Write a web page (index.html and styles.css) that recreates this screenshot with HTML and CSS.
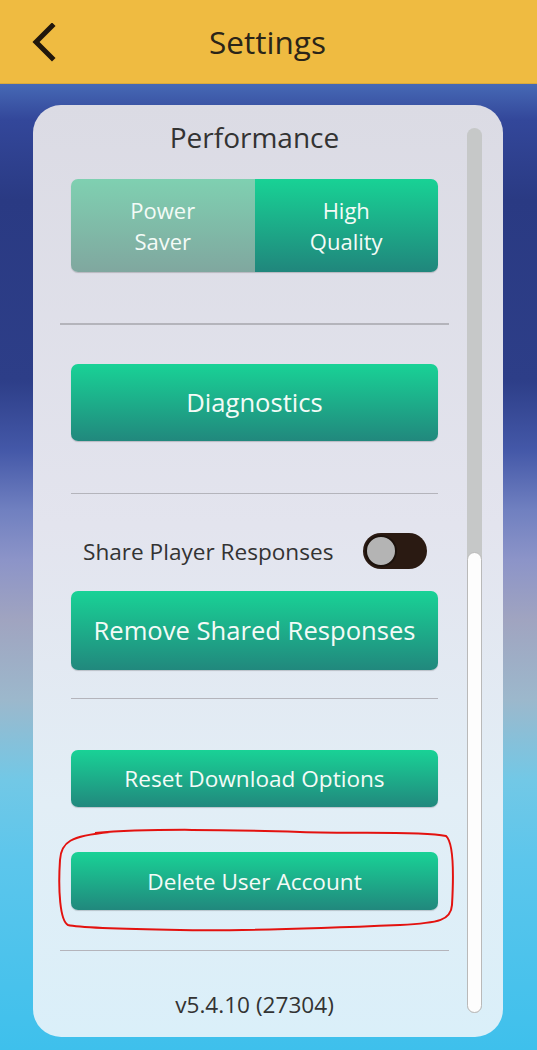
FILE: index.html
```html
<!DOCTYPE html>
<html>
<head>
<meta charset="utf-8">
<link rel="stylesheet" href="styles.css">
</head>
<body>
<div class="page">
  <header class="topbar">
    <div class="back">
      <svg width="30" height="40" viewBox="0 0 30 40"><polyline points="21,3 5,19 21,35" fill="none" stroke="#21170c" stroke-width="5" stroke-linecap="square"/></svg>
    </div>
    <div class="title">Settings</div>
    <div></div>
  </header>
  <main class="main">
    <section class="card">
      <div class="content">
        <div class="heading">Performance</div>
        <div class="seg">
          <div class="seg-item off">Power<br>Saver</div>
          <div class="seg-item on">High<br>Quality</div>
        </div>
        <div class="divider wide thick"></div>
        <div class="btn big diag">Diagnostics</div>
        <div class="divider narrow d1"></div>
        <div class="share">
          <span>Share Player Responses</span>
          <div class="toggle"><div class="knob"></div></div>
        </div>
        <div class="btn big remove">Remove Shared Responses</div>
        <div class="divider narrow d2"></div>
        <div class="btn small reset">Reset Download Options</div>
        <div class="btn small delete">Delete User Account</div>
        <div class="divider wide d3"></div>
        <div class="version">v5.4.10 (27304)</div>
      </div>
      <div class="scroll"><div class="thumb"></div></div>
    </section>
  </main>
  <svg class="annot" width="537" height="1050" viewBox="0 0 537 1050">
    <path d="M 95 833 C 150 828, 230 830, 300 832 C 360 834, 420 831, 446 836 C 453 842, 454 870, 452 905 C 451 920, 440 923, 400 925 C 330 928, 250 931, 180 930 C 120 929, 80 928, 68 925 C 60 921, 58 890, 60 860 C 61 842, 70 836, 110 832" fill="none" stroke="#e3120f" stroke-width="2"/>
  </svg>
</div>
</body>
</html>
```
FILE: styles.css
```css
html, body {
  margin: 0;
  padding: 0;
}
body {
  width: 537px;
  height: 1050px;
  overflow: hidden;
  font-family: "Open Sans", "Noto Sans", sans-serif;
  color: #333;
}
.page {
  position: relative;
  width: 537px;
  height: 1050px;
  background: linear-gradient(180deg,
    #4669b5 84px,
    #33479a 120px,
    #2a3a83 200px,
    #2d3e88 380px,
    #4458a8 450px,
    #7080c0 510px,
    #8c94c8 560px,
    #a0a4c0 620px,
    #9cb8cc 700px,
    #72c8e6 780px,
    #5cc6ec 860px,
    #3ec0ec 1050px);
}
.topbar {
  height: 84px;
  background: #efbb41;
  border-bottom: 1px solid #d9a93c;
  box-sizing: border-box;
  display: grid;
  grid-template-columns: 1fr auto 1fr;
  align-items: center;
}
.back {
  padding-left: 31px;
  display: flex;
  align-items: center;
  padding-top: 2px;
}
.back svg { display: block; }
.title {
  font-size: 31.5px;
  line-height: 40px;
  color: #2a2418;
  padding-right: 2px;
}
.main {
  padding: 21px 34px 0 33px;
}
.card {
  position: relative;
  height: 932px;
  box-sizing: border-box;
  border-radius: 28px;
  background: linear-gradient(180deg, #dbdbe4 0%, #e3e4ee 45%, #e2eef6 75%, #daeff9 100%);
  padding: 14px 54px 0 27px;
}
.heading {
  font-size: 28px;
  line-height: 37px;
  text-align: center;
  color: #333;
}
.seg {
  margin: 23px 11px 0;
  height: 93px;
  display: flex;
  border-radius: 7px;
  overflow: hidden;
  box-shadow: 0 1px 1px rgba(0,0,0,0.18);
}
.seg-item {
  flex: 1;
  display: flex;
  align-items: center;
  justify-content: center;
  text-align: center;
  font-size: 22px;
  line-height: 31px;
  color: #f4fbf7;
}
.seg-item.off {
  background: linear-gradient(180deg, #7fd0b1, #80a79f);
}
.seg-item.on {
  background: linear-gradient(180deg, #18d295, #20867c);
}
.divider {
  background: #b4b4bb;
  height: 1px;
}
.divider.thick { height: 2px; }
.divider.wide { margin-left: 0; margin-right: 0; }
.divider.narrow { margin-left: 11px; margin-right: 11px; }
.thick { margin-top: 51px; }
.d1 { margin-top: 52px; }
.d2 { margin-top: 28px; }
.d3 { margin-top: 40px; }
.btn {
  margin-left: 11px;
  margin-right: 11px;
  border-radius: 7px;
  background: linear-gradient(180deg, #19d296, #21887d);
  color: #f4fbf7;
  display: flex;
  align-items: center;
  justify-content: center;
  box-shadow: 0 1px 1px rgba(0,0,0,0.18);
}
.btn.big {
  font-size: 25.6px;
}
.btn.small {
  font-size: 22.6px;
}
.diag { margin-top: 39px; height: 77px; }
.remove { margin-top: 22px; height: 79px; }
.reset { margin-top: 51px; height: 57px; }
.delete { margin-top: 45px; height: 58px; }
.share {
  margin: 39px 11px 0;
  padding: 0 11px 0 12px;
  height: 36px;
  display: flex;
  align-items: center;
  justify-content: space-between;
  font-size: 22.6px;
  color: #333;
}
.toggle {
  width: 64px;
  height: 36px;
  border-radius: 18px;
  background: #2a1a12;
  box-sizing: border-box;
  padding: 2px;
  display: flex;
  align-items: center;
}
.knob {
  width: 32px;
  height: 32px;
  border-radius: 50%;
  background: #b4b4b4;
  box-sizing: border-box;
  border: 2px solid #1c120c;
}
.version {
  margin-top: 39px;
  font-size: 22.6px;
  line-height: 30px;
  text-align: center;
  color: #333;
}
.scroll {
  position: absolute;
  left: 434px;
  top: 23px;
  width: 15px;
  height: 885px;
  border-radius: 8px;
  background: #c6c8c8;
}
.thumb {
  position: absolute;
  left: 0;
  right: 0;
  top: 424px;
  bottom: 0;
  border-radius: 8px;
  background: #fdfdfd;
  border: 1px solid #b9b9b9;
}
.annot {
  position: absolute;
  left: 0;
  top: 0;
  pointer-events: none;
}
```
